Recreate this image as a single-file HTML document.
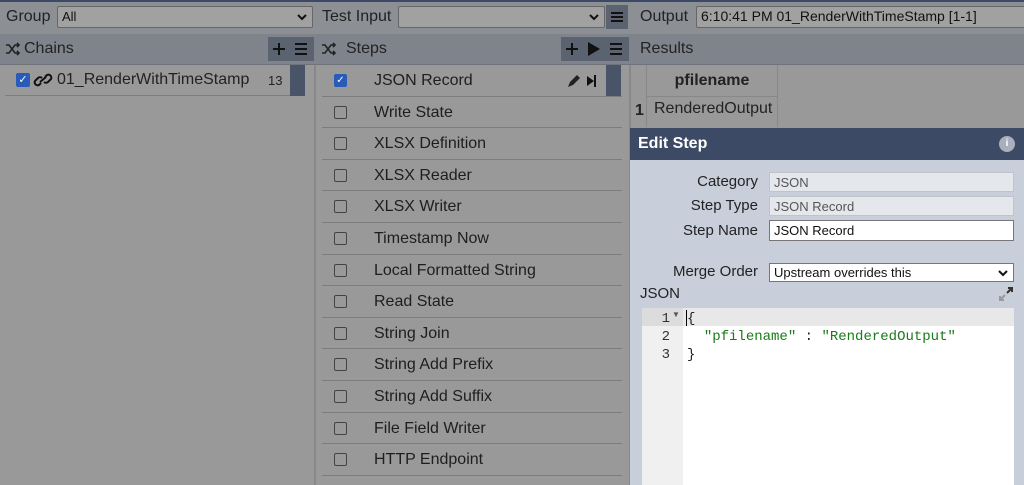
<!DOCTYPE html><html><head><style>
*{box-sizing:border-box;margin:0;padding:0}
body{width:1024px;height:485px;overflow:hidden;background:#999;font-family:"Liberation Sans",sans-serif;position:relative;color:#222}
.a{position:absolute}
.sel{position:absolute;border:1px solid #666;background:#a1a1a1;border-radius:2px;font-size:13px;padding:2px 4px;color:#111}
.chev{position:absolute;right:5px;top:7px}
.row{position:absolute;left:322px;width:300px;height:31.6px;border-bottom:1px solid #7d7d7d;font-size:16px;color:#1e1e1e}
.row .cb{position:absolute;left:12px;top:9px;width:13px;height:13px;border:1px solid #444;border-radius:2px}
.row span{position:absolute;left:52px;top:7px}
.hdr{font-size:16px;color:#222}
</style></head><body>
<div class="a" style="left:0;top:0;width:1024px;height:34px;background:#8c8f94;border-top:2px solid #3d4a66"></div>
<div class="a" style="left:0;top:34px;width:1024px;height:31px;background:#7f838b;border-bottom:1px solid #6f737a"></div>
<div class="a hdr" style="left:6px;top:8px">Group</div>
<div class="sel" style="left:57px;top:6px;width:256px;height:22px">All<svg class="chev" width="10" height="7" viewBox="0 0 10 7"><path d="M1 1l4 4 4-4" stroke="#111" stroke-width="2" fill="none"/></svg></div>
<div class="a hdr" style="left:322px;top:8px">Test Input</div>
<div class="sel" style="left:398px;top:6px;width:207px;height:22px"><svg class="chev" width="10" height="7" viewBox="0 0 10 7"><path d="M1 1l4 4 4-4" stroke="#111" stroke-width="2" fill="none"/></svg></div>
<div class="a" style="left:606px;top:5px;width:22px;height:24px;background:#5c6370"><svg width="22" height="24"><path d="M5 8h12M5 12h12M5 16h12" stroke="#111" stroke-width="2"/></svg></div>
<div class="a hdr" style="left:640px;top:8px">Output</div>
<div class="sel" style="left:696px;top:6px;width:330px;height:22px;font-size:14px;padding-top:1px">6:10:41 PM 01_RenderWithTimeStamp [1-1]</div>
<svg class="a" style="left:5px;top:42px" width="16" height="14"><path d="M1 3h3l6 8h4M1 11h3l6-8h4M12 1l2 2-2 2M12 9l2 2-2 2" stroke="#222" stroke-width="1.6" fill="none"/></svg>
<div class="a hdr" style="left:24px;top:40px">Chains</div>
<div class="a" style="left:268px;top:37px;width:46px;height:24px;background:#5c6370"><svg width="46" height="24"><path d="M5 12h12M11 6v12M27 7h12M27 12h12M27 17h12" stroke="#111" stroke-width="2"/></svg></div>
<svg class="a" style="left:321px;top:42px" width="16" height="14"><path d="M1 3h3l6 8h4M1 11h3l6-8h4M12 1l2 2-2 2M12 9l2 2-2 2" stroke="#222" stroke-width="1.6" fill="none"/></svg>
<div class="a hdr" style="left:346px;top:40px">Steps</div>
<div class="a" style="left:561px;top:37px;width:68px;height:24px;background:#5c6370"><svg width="68" height="24"><path d="M5 12h12M11 6v12M49 7h12M49 12h12M49 17h12" stroke="#111" stroke-width="2"/><path d="M27 5l12 7-12 7z" fill="#111"/></svg></div>
<div class="a hdr" style="left:640px;top:40px">Results</div>
<div class="a" style="left:314px;top:65px;width:2px;height:420px;background:#888"></div>
<div class="a" style="left:5px;top:65px;width:300px;height:31px;border-bottom:1px solid #7d7d7d"></div>
<div class="a" style="left:16px;top:73px;width:14px;height:14px;background:#2a5bb8;border-radius:2px;color:#fff;font-size:11px;text-align:center;line-height:14px">✓</div>
<svg class="a" style="left:33px;top:72px" width="20" height="16"><path d="M8 11l-2 2a3 3 0 01-4-4l3-3a3 3 0 014 0M12 5l2-2a3 3 0 014 4l-3 3a3 3 0 01-4 0M7 10l6-5" stroke="#111" stroke-width="2" fill="none"/></svg>
<div class="a" style="left:57px;top:71px;font-size:16px">01_RenderWithTimeStamp</div>
<div class="a" style="left:268px;top:73px;font-size:13px">13</div>
<div class="a" style="left:290px;top:65px;width:15px;height:31px;background:#4a5468"></div>
<div class="a" style="left:606px;top:65px;width:15px;height:31px;background:#4a5468"></div>
<div class="row" style="top:65px"><div class="cb" style="background:#2a5bb8;border-color:#2a5bb8;color:#fff;font-size:10px;text-align:center;line-height:12px">✓</div><span>JSON Record</span>
<svg style="position:absolute;left:244px;top:8px" width="36" height="16"><path d="M2 14l2-5 7-7 3 3-7 7z" fill="#222"/><path d="M21 3l7 5-7 5z" fill="#111"/><path d="M29 2v12" stroke="#111" stroke-width="2"/></svg></div>
<div class="row" style="top:96.6px"><div class="cb"></div><span>Write State</span></div>
<div class="row" style="top:128.2px"><div class="cb"></div><span>XLSX Definition</span></div>
<div class="row" style="top:159.8px"><div class="cb"></div><span>XLSX Reader</span></div>
<div class="row" style="top:191.4px"><div class="cb"></div><span>XLSX Writer</span></div>
<div class="row" style="top:223px"><div class="cb"></div><span>Timestamp Now</span></div>
<div class="row" style="top:254.6px"><div class="cb"></div><span>Local Formatted String</span></div>
<div class="row" style="top:286.2px"><div class="cb"></div><span>Read State</span></div>
<div class="row" style="top:317.8px"><div class="cb"></div><span>String Join</span></div>
<div class="row" style="top:349.4px"><div class="cb"></div><span>String Add Prefix</span></div>
<div class="row" style="top:381px"><div class="cb"></div><span>String Add Suffix</span></div>
<div class="row" style="top:412.6px"><div class="cb"></div><span>File Field Writer</span></div>
<div class="row" style="top:444.2px"><div class="cb"></div><span>HTTP Endpoint</span></div>
<div class="a" style="left:629px;top:65px;width:2px;height:420px;background:#888"></div>
<div class="a" style="left:632px;top:65px;width:15px;height:62px;background:#999;border-right:1px solid #888"></div>
<div class="a" style="left:647px;top:65px;width:131px;height:32px;background:#999;border-right:1px solid #888;border-bottom:1px solid #888;font-weight:bold;font-size:16px;text-align:center;line-height:32px">pfilename</div>
<div class="a" style="left:635px;top:102px;font-size:16px;font-weight:bold">1</div>
<div class="a" style="left:654px;top:100px;font-size:16px">RenderedOutput</div>
<div class="a" style="left:777px;top:97px;width:1px;height:30px;background:#888"></div>
<div class="a" style="left:630px;top:128px;width:394px;height:357px;background:#c8cfdb"></div>
<div class="a" style="left:630px;top:128px;width:394px;height:32px;background:#3d4a66;color:#fff;font-weight:bold;font-size:16px;padding:7px 8px">Edit Step</div>
<div class="a" style="left:999px;top:136px;width:16px;height:16px;border-radius:8px;background:#a9b0bd;color:#fff;font-size:10px;font-weight:bold;text-align:center;line-height:16px">i</div>
<div class="a" style="left:640px;top:173px;width:118px;text-align:right;font-size:15px">Category</div>
<div class="a" style="left:640px;top:197px;width:118px;text-align:right;font-size:15px">Step Type</div>
<div class="a" style="left:640px;top:222px;width:118px;text-align:right;font-size:15px">Step Name</div>
<div class="a" style="left:640px;top:263px;width:118px;text-align:right;font-size:15px">Merge Order</div>
<div class="a" style="left:769px;top:172px;width:245px;height:20px;background:#e4e7ec;border:1px solid #c0c4ca;font-size:13px;padding:2px 4px;color:#555">JSON</div>
<div class="a" style="left:769px;top:196px;width:245px;height:20px;background:#e4e7ec;border:1px solid #c0c4ca;font-size:13px;padding:2px 4px;color:#555">JSON Record</div>
<div class="a" style="left:769px;top:220px;width:245px;height:21px;background:#fff;border:1px solid #777;font-size:13px;padding:2px 4px;color:#111">JSON Record</div>
<div class="a" style="left:769px;top:263px;width:245px;height:19px;background:#fff;border:1px solid #777;font-size:13px;padding:1px 4px;color:#111">Upstream overrides this<svg class="chev" style="top:6px" width="10" height="7" viewBox="0 0 10 7"><path d="M1 1l4 4 4-4" stroke="#111" stroke-width="2" fill="none"/></svg></div>
<div class="a" style="left:640px;top:285px;font-size:15px">JSON</div>
<svg class="a" style="left:998px;top:286px" width="16" height="16"><path d="M9 7l5-5M10 2h4v4" stroke="#333" stroke-width="2" fill="none"/><path d="M7 9l-5 5M2 10v4h4" stroke="#999" stroke-width="2" fill="none"/></svg>
<div class="a" style="left:642px;top:308px;width:372px;height:177px;background:#fff"></div>
<div class="a" style="left:642px;top:308px;width:41px;height:177px;background:#f0f0f0"></div>
<div class="a" style="left:642px;top:308px;width:372px;height:18px;background:#e8e8e8"></div>
<div class="a" style="left:642px;top:308px;width:41px;height:18px;background:#dcdcdc"></div>
<div class="a" style="left:648px;top:310px;width:22px;font-family:'Liberation Mono',monospace;font-size:14px;line-height:18px;text-align:right;color:#333;white-space:pre">1
2
3</div>
<div class="a" style="left:672px;top:310px;font-size:8px;color:#555">▼</div>
<div class="a" style="left:687px;top:310px;font-family:'Liberation Mono',monospace;font-size:14px;line-height:18px;white-space:pre;color:#222">{
  <span style="color:#1a7a1a">"pfilename"</span> : <span style="color:#1a7a1a">"RenderedOutput"</span>
}</div>
<div class="a" style="left:686px;top:310px;width:1px;height:16px;background:#000"></div>
</body></html>
